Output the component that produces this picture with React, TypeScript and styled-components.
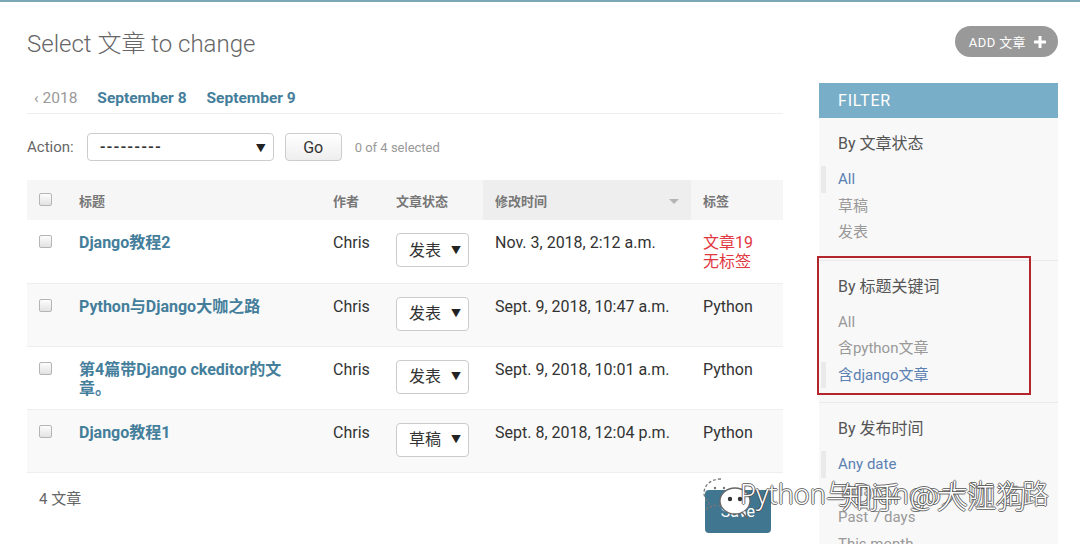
import React from 'react';
import styled, { createGlobalStyle } from 'styled-components';

const Global = createGlobalStyle`
  html, body { margin: 0; padding: 0; background: #fff; }
  body { font-family: Roboto, "Noto Sans CJK SC", "Noto Sans", sans-serif; color: #333; }
  * { box-sizing: border-box; }
`;

const Page = styled.div`
  position: relative;
  width: 1080px;
  height: 544px;
  overflow: hidden;
  background: #fff;
`;

const TopLine = styled.div`
  height: 2px;
  background: #7ba8b6;
`;

const Content = styled.div`
  padding: 0 22px 0 27px;
`;

const HeaderRow = styled.div`
  display: flex;
  justify-content: space-between;
  align-items: center;
  margin-top: 24px;
  height: 31px;
`;

const Title = styled.h1`
  margin: 0;
  padding-top: 4px;
  font-size: 24px;
  font-weight: 300;
  color: #666;
  line-height: 28px;
`;

const AddButton = styled.a`
  display: flex;
  align-items: center;
  gap: 8px;
  height: 31px;
  padding: 0 12px 0 14px;
  border-radius: 16px;
  background: #999;
  color: #fff;
  font-size: 13px;
  letter-spacing: 0.4px;
  text-transform: uppercase;
`;

const Body = styled.div`
  display: flex;
  gap: 36px;
  margin-top: 26px;
`;

const Main = styled.div`
  width: 756px;
  flex: none;
`;

const DateHierarchy = styled.div`
  display: flex;
  gap: 20px;
  padding: 5px 0 5px 7px;
  border-bottom: 1px solid #eee;
  font-size: 15.5px;
  line-height: 20px;
`;

const DateLink = styled.a<{ $back?: boolean }>`
  color: ${(p) => (p.$back ? '#999' : '#447e9b')};
  font-weight: ${(p) => (p.$back ? 400 : 700)};
`;

const ActionBar = styled.div`
  display: flex;
  align-items: center;
  height: 28px;
  margin-top: 19px;
`;

const ActionLabel = styled.span`
  font-size: 15px;
  color: #666;
  margin-right: 13px;
`;

const FakeSelect = styled.div<{ $w: number; $h: number }>`
  display: flex;
  align-items: center;
  justify-content: space-between;
  width: ${(p) => p.$w}px;
  height: ${(p) => p.$h}px;
  border: 1px solid #ccc;
  border-radius: 4px;
  background: #fff;
  padding: 0 7px 0 12px;
  color: #333;
`;

const SelectText = styled.span<{ $bold?: boolean }>`
  font-size: ${(p) => (p.$bold ? 15 : 16)}px;
  font-weight: ${(p) => (p.$bold ? 700 : 400)};
  letter-spacing: ${(p) => (p.$bold ? '1px' : '0')};
`;

const Arrow = styled.span`
  font-size: 10px;
  color: #222;
`;

const GoButton = styled.button`
  margin-left: 11px;
  width: 57px;
  height: 28px;
  border: 1px solid #ccc;
  border-radius: 4px;
  background: linear-gradient(#fff, #eee);
  font-family: inherit;
  font-size: 16px;
  color: #333;
  padding: 0;
`;

const SelectedCount = styled.span`
  margin-left: 13px;
  font-size: 13px;
  color: #999;
`;

const Table = styled.table`
  margin-top: 19px;
  width: 756px;
  border-collapse: collapse;
  table-layout: fixed;
`;

const Th = styled.th<{ $sorted?: boolean }>`
  height: 40px;
  padding: 0 12px;
  text-align: left;
  vertical-align: middle;
  background: ${(p) => (p.$sorted ? '#eeeeee' : '#f6f6f6')};
  font-size: 13px;
  font-weight: 600;
  color: #777;
`;

const SortInner = styled.div`
  display: flex;
  justify-content: space-between;
  align-items: center;
`;

const SortArrow = styled.span`
  width: 0;
  height: 0;
  border-left: 5px solid transparent;
  border-right: 5px solid transparent;
  border-top: 5px solid #b5b5b5;
  margin-top: 2px;
`;

const Tr = styled.tr<{ $alt?: boolean }>`
  height: 63px;
  background: ${(p) => (p.$alt ? '#f9f9f9' : '#fff')};
  border-bottom: 1px solid #eee;
`;

const Td = styled.td`
  padding: 13px 12px 0;
  vertical-align: top;
  font-size: 16px;
  line-height: 19px;
  color: #333;
`;

const Check = styled.span<{ $top?: number }>`
  display: block;
  width: 13px;
  height: 13px;
  margin-top: ${(p) => p.$top ?? 0}px;
  border: 1px solid #b5b5b5;
  border-radius: 2px;
  background: linear-gradient(#fdfdfd, #e2e2e2);
`;

const TitleLink = styled.a`
  color: #447e9b;
  font-weight: 700;
`;

const Tag = styled.span<{ $red?: boolean }>`
  display: block;
  color: ${(p) => (p.$red ? '#e2383f' : '#333')};
`;

const Footer = styled.div`
  display: flex;
  justify-content: space-between;
  align-items: flex-start;
  padding: 16px 12px 0;
`;

const Count = styled.span`
  font-size: 15px;
  line-height: 20px;
  color: #666;
`;

const SaveButton = styled.button`
  margin-top: 1px;
  height: 43px;
  padding: 0 16px;
  border: none;
  border-radius: 4px;
  background: #417690;
  color: #fff;
  font-family: inherit;
  font-size: 16px;
`;

const Filter = styled.div`
  position: relative;
  width: 239px;
  height: 480px;
  flex: none;
  background: #f8f8f8;
`;

const FilterTitle = styled.h2`
  margin: 0;
  height: 35px;
  display: flex;
  align-items: center;
  padding-left: 19px;
  background: #79aec8;
  color: #fff;
  font-size: 16px;
  font-weight: 400;
  letter-spacing: 0.8px;
`;

const FilterSection = styled.div`
  padding: 16px 19px 14px;
  border-bottom: 1px solid #eaeaea;
`;

const FilterHeading = styled.h3`
  margin: 0 0 12px;
  font-size: 16px;
  line-height: 20px;
  font-weight: 400;
  color: #555;
`;

const FilterList = styled.ul`
  list-style: none;
  margin: 0;
  padding: 0;
`;

const FilterItem = styled.li<{ $selected?: boolean }>`
  font-size: 15px;
  line-height: 26.5px;
  color: ${(p) => (p.$selected ? '#5b80b2' : '#999')};
  margin-left: ${(p) => (p.$selected ? '-17px' : '0')};
  padding-left: ${(p) => (p.$selected ? '12px' : '0')};
  border-left: ${(p) => (p.$selected ? '5px solid #eaeaea' : 'none')};
`;

const Annotation = styled.div`
  position: absolute;
  left: -2px;
  top: 173px;
  width: 214px;
  height: 139px;
  border: 2px solid #b3262d;
  pointer-events: none;
`;

const Watermark = styled.div`
  position: absolute;
  left: 702px;
  top: 474px;
  pointer-events: none;
`;

const WmIcon = styled.svg`
  position: absolute;
  left: 0;
  top: 2px;
`;

const WmText = styled.span<{ $left: number; $top: number; $size: number }>`
  position: absolute;
  left: ${(p) => p.$left}px;
  top: ${(p) => p.$top}px;
  white-space: nowrap;
  font-family: "Noto Sans", "Noto Sans CJK SC", sans-serif;
  font-weight: 300;
  font-size: ${(p) => p.$size}px;
  line-height: 1;
  color: #fff;
  text-shadow: -1px 0 rgba(70, 70, 70, 0.75), 1px 0 rgba(70, 70, 70, 0.75),
    0 -1px rgba(70, 70, 70, 0.75), 0 1px rgba(70, 70, 70, 0.75);
`;

type Row = {
  title: string;
  status: string;
  date: string;
  tags: { text: string; red?: boolean }[];
};

const rows: Row[] = [
  { title: 'Django教程2', status: '发表', date: 'Nov. 3, 2018, 2:12 a.m.', tags: [{ text: '文章19', red: true }, { text: '无标签', red: true }] },
  { title: 'Python与Django大咖之路', status: '发表', date: 'Sept. 9, 2018, 10:47 a.m.', tags: [{ text: 'Python' }] },
  { title: '第4篇带Django ckeditor的文章。', status: '发表', date: 'Sept. 9, 2018, 10:01 a.m.', tags: [{ text: 'Python' }] },
  { title: 'Django教程1', status: '草稿', date: 'Sept. 8, 2018, 12:04 p.m.', tags: [{ text: 'Python' }] },
];

const filters: { heading: string; items: { label: string; selected?: boolean }[] }[] = [
  { heading: 'By 文章状态', items: [{ label: 'All', selected: true }, { label: '草稿' }, { label: '发表' }] },
  { heading: 'By 标题关键词', items: [{ label: 'All' }, { label: '含python文章' }, { label: '含django文章', selected: true }] },
  { heading: 'By 发布时间', items: [{ label: 'Any date', selected: true }, { label: 'Today' }, { label: 'Past 7 days' }, { label: 'This month' }] },
];

const colWidths = [40, 254, 63, 99, 208, 92];

export default function App() {
  return (
    <Page>
      <Global />
      <TopLine />
      <Content>
        <HeaderRow>
          <Title>Select 文章 to change</Title>
          <AddButton>
            ADD 文章
            <svg width="12" height="12" viewBox="0 0 12 12">
              <rect x="4.5" y="0" width="3" height="12" rx="0.5" fill="#fff" />
              <rect x="0" y="4.5" width="12" height="3" rx="0.5" fill="#fff" />
            </svg>
          </AddButton>
        </HeaderRow>
        <Body>
          <Main>
            <DateHierarchy>
              <DateLink $back>‹ 2018</DateLink>
              <DateLink>September 8</DateLink>
              <DateLink>September 9</DateLink>
            </DateHierarchy>
            <ActionBar>
              <ActionLabel>Action:</ActionLabel>
              <FakeSelect $w={187} $h={28}>
                <SelectText $bold>---------</SelectText>
                <Arrow>▼</Arrow>
              </FakeSelect>
              <GoButton>Go</GoButton>
              <SelectedCount>0 of 4 selected</SelectedCount>
            </ActionBar>
            <Table>
              <colgroup>
                {colWidths.map((w, i) => (
                  <col key={i} style={{ width: w }} />
                ))}
              </colgroup>
              <thead>
                <tr>
                  <Th><Check $top={-2} /></Th>
                  <Th>标题</Th>
                  <Th>作者</Th>
                  <Th>文章状态</Th>
                  <Th $sorted>
                    <SortInner>
                      <span>修改时间</span>
                      <SortArrow />
                    </SortInner>
                  </Th>
                  <Th>标签</Th>
                </tr>
              </thead>
              <tbody>
                {rows.map((r, i) => (
                  <Tr key={i} $alt={i % 2 === 1}>
                    <Td><Check $top={2} /></Td>
                    <Td><TitleLink>{r.title}</TitleLink></Td>
                    <Td>Chris</Td>
                    <Td>
                      <FakeSelect $w={73} $h={34}>
                        <SelectText>{r.status}</SelectText>
                        <Arrow>▼</Arrow>
                      </FakeSelect>
                    </Td>
                    <Td>{r.date}</Td>
                    <Td>
                      {r.tags.map((t, j) => (
                        <Tag key={j} $red={t.red}>{t.text}</Tag>
                      ))}
                    </Td>
                  </Tr>
                ))}
              </tbody>
            </Table>
            <Footer>
              <Count>4 文章</Count>
              <SaveButton>Save</SaveButton>
            </Footer>
          </Main>
          <Filter>
            <FilterTitle>FILTER</FilterTitle>
            {filters.map((f) => (
              <FilterSection key={f.heading}>
                <FilterHeading>{f.heading}</FilterHeading>
                <FilterList>
                  {f.items.map((it) => (
                    <FilterItem key={it.label} $selected={it.selected}>{it.label}</FilterItem>
                  ))}
                </FilterList>
              </FilterSection>
            ))}
            <Annotation />
          </Filter>
        </Body>
      </Content>
      <Watermark>
        <WmIcon width="56" height="44" viewBox="0 0 56 44">
          <path d="M19 3 C8 3 2 10 2 17 C2 21 4 24 7 27 L5 33 L12 29 C14 30 17 30 19 30" fill="none" stroke="#777" strokeWidth="1.3" strokeDasharray="3 2" />
          <ellipse cx="33" cy="25" rx="15" ry="13" fill="#fff" stroke="#666" strokeWidth="1.3" />
          <path d="M40 36 L45 42 L44 35" fill="#fff" stroke="#666" strokeWidth="1.2" />
          <circle cx="28" cy="23" r="2.2" fill="#333" />
          <circle cx="38" cy="23" r="2.2" fill="#333" />
          <circle cx="13" cy="12" r="1.2" fill="#777" />
          <circle cx="22" cy="12" r="1.2" fill="#777" />
        </WmIcon>
        <WmText $left={38} $top={6} $size={27}>Python与Django大咖之路</WmText>
        <WmText $left={140} $top={8} $size={30}>知乎 @大江狗</WmText>
      </Watermark>
    </Page>
  );
}
